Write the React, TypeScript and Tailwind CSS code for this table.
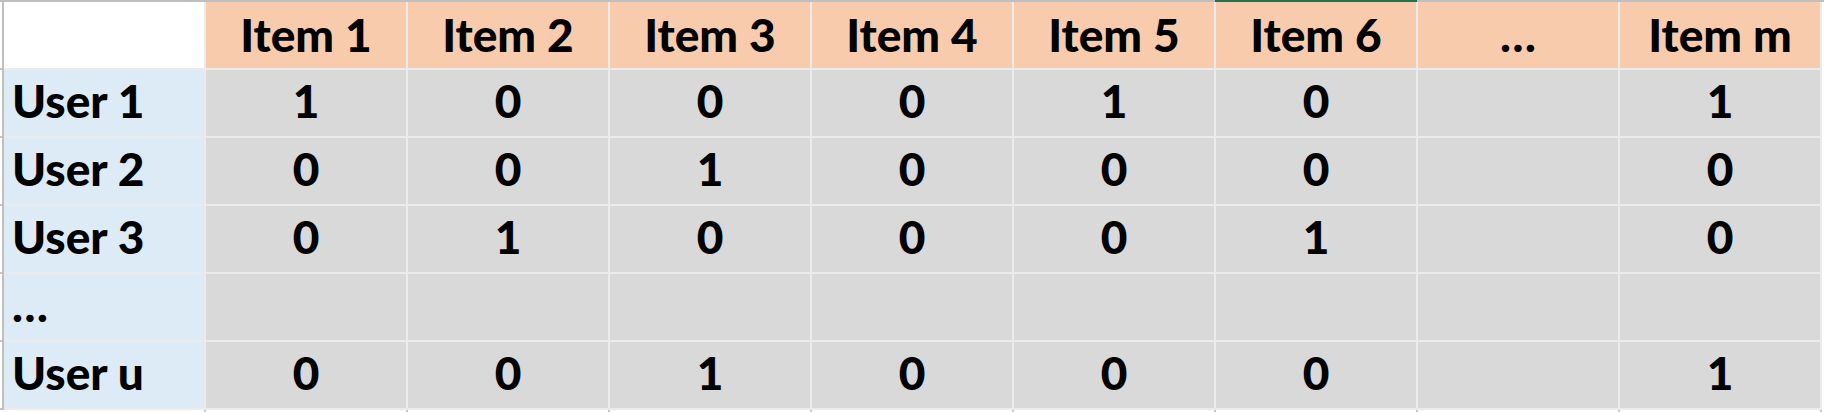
import React from 'react';

const ITEMS = ['Item 1', 'Item 2', 'Item 3', 'Item 4', 'Item 5', 'Item 6', '…', 'Item m'];

const ROWS: { label: string; values: string[] }[] = [
  { label: 'User 1', values: ['1', '0', '0', '0', '1', '0', '', '1'] },
  { label: 'User 2', values: ['0', '0', '1', '0', '0', '0', '', '0'] },
  { label: 'User 3', values: ['0', '1', '0', '0', '0', '1', '', '0'] },
  { label: '…', values: ['', '', '', '', '', '', '', ''] },
  { label: 'User u', values: ['0', '0', '1', '0', '0', '0', '', '1'] },
];

export default function App() {
  return (
    <div className="w-[1824px] h-[412px] bg-white flex flex-col overflow-hidden font-['Lato',sans-serif] font-black text-black text-[46px] leading-none">
      {/* column header strip, Item 6 selected */}
      <div className="flex h-[2px] shrink-0">
        <div className="w-[1215px] bg-[#bfbfbf]" />
        <div className="w-[202px] bg-[#217346]" />
        <div className="flex-1 bg-[#bfbfbf]" />
      </div>

      <div className="flex">
        {/* row ticks */}
        <div className="w-[2px] flex flex-col">
          {Array.from({ length: 6 }).map((_, i) => (
            <div key={i} className="flex flex-col">
              <div className="h-[66px]" />
              <div className="h-[2px] bg-[#c4c4c4]" />
            </div>
          ))}
        </div>
        <div className="w-[2px] bg-[#bfbfbf]" />

        {/* sheet */}
        <div className="grid grid-cols-[repeat(9,200px)] auto-rows-[66px] gap-[2px] pr-[2px] pb-[2px] bg-[#ebebeb]">
          <div className="bg-white" />
          {ITEMS.map((item) => (
            <div key={item} className="bg-[#f8cbad] flex items-end justify-center pb-[10px]">
              {item}
            </div>
          ))}

          {ROWS.map((row) => (
            <React.Fragment key={row.label}>
              <div className="bg-[#ddebf7] flex items-end pl-[8px] pb-[12px]">{row.label}</div>
              {row.values.map((v, i) => (
                <div key={i} className="bg-[#d9d9d9] flex items-end justify-center pb-[12px]">
                  {v}
                </div>
              ))}
            </React.Fragment>
          ))}
        </div>
      </div>

      {/* bottom ticks */}
      <div className="flex h-[2px] pl-[4px]">
        {ITEMS.concat(['']).map((_, i) => (
          <div key={i} className="flex">
            <div className="w-[200px]" />
            <div className="w-[2px] bg-[#c4c4c4]" />
          </div>
        ))}
      </div>
    </div>
  );
}
